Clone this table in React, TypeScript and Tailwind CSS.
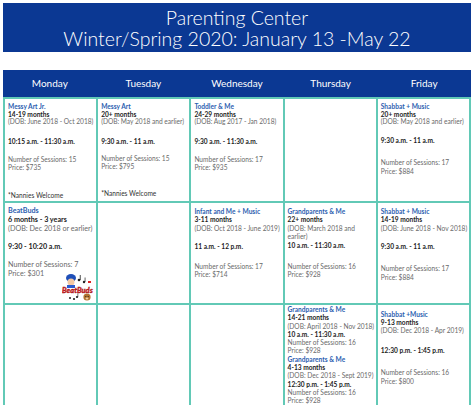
import type { ReactNode } from 'react';

const DAYS = ['Monday', 'Tuesday', 'Wednesday', 'Thursday', 'Friday'];

function Name({ children }: { children: ReactNode }) {
  return <div className="font-bold text-[#2c5eb0]">{children}</div>;
}

function Bold({ children, className = '' }: { children: ReactNode; className?: string }) {
  return <div className={`font-bold text-[#1c1c1c] ${className}`}>{children}</div>;
}

function Gray({ children, className = '' }: { children: ReactNode; className?: string }) {
  return <div className={`text-[#6a6a6a] ${className}`}>{children}</div>;
}

function Cell({ children, className = '' }: { children?: ReactNode; className?: string }) {
  return (
    <div className={`border-r-2 border-b-2 border-[#62c9b6] px-[3px] whitespace-nowrap overflow-hidden ${className}`}>
      {children}
    </div>
  );
}

function BeatBudsLogo() {
  return (
    <svg width="32" height="28" viewBox="0 0 32 28" className="block">
      {/* kid with blue hair */}
      <ellipse cx="9" cy="5" rx="5" ry="4" fill="#1f4fb8" />
      <circle cx="9" cy="9" r="3.5" fill="#f3c9a4" />
      <rect x="5" y="12" width="8" height="3" fill="#2a5ad0" />
      {/* notes */}
      <circle cx="17" cy="7" r="1.3" fill="#222" />
      <rect x="17.8" y="2" width="0.8" height="5" fill="#222" />
      <circle cx="22" cy="9" r="1.2" fill="#222" />
      <rect x="22.7" y="4.5" width="0.7" height="4.5" fill="#222" />
      <rect x="26" y="8" width="3" height="2" fill="#d22" />
      <text x="0" y="20" fontFamily="Lato, sans-serif" fontWeight="900" fontStyle="italic" fontSize="7.5" fill="#e3211d" stroke="#8a0d0d" strokeWidth="0.3">
        BeatBuds
      </text>
      {/* notes bottom */}
      <circle cx="8" cy="25" r="1" fill="#222" />
      <circle cx="12" cy="26" r="1.1" fill="#222" />
      <circle cx="15" cy="24" r="1.1" fill="#222" />
      <rect x="15.6" y="20.5" width="0.6" height="3.5" fill="#222" />
      {/* bear face */}
      <circle cx="25" cy="24" r="3.6" fill="#b0722e" />
      <circle cx="23.8" cy="23.5" r="0.6" fill="#222" />
      <circle cx="26.2" cy="23.5" r="0.6" fill="#222" />
      <ellipse cx="25" cy="25.5" rx="1.4" ry="0.9" fill="#f0d2a0" />
    </svg>
  );
}

export default function App() {
  return (
    <div className="w-[474px] h-[405px] overflow-hidden bg-white px-[3px] pt-[3px] font-['Lato',sans-serif]">
      <div className="h-[49px] bg-[#0b3893] flex flex-col items-center justify-center text-white font-light text-[19.5px] leading-[21px]">
        <div>Parenting Center</div>
        <div>Winter/Spring 2020: January 13 -May 22</div>
      </div>

      <div className="mt-[18px] h-[27px] bg-[#0b3893] grid grid-cols-5 items-center text-white text-[10px]">
        {DAYS.map((d) => (
          <div key={d} className="text-center">{d}</div>
        ))}
      </div>

      <div className="grid grid-cols-5 grid-rows-[104px_102px_110px] border-l-2 border-t-2 border-[#62c9b6] text-[6.6px] leading-[7.6px]">
        {/* row 1 */}
        <Cell className="pt-[4px]">
          <Name>Messy Art Jr.</Name>
          <Bold>14-19 months</Bold>
          <Gray>(DOB: June 2018 - Oct 2018)</Gray>
          <Bold className="mt-[12px]">10:15 a.m. - 11:30 a.m.</Bold>
          <Gray className="mt-[11px]">Number of Sessions: 15</Gray>
          <Gray>Price: $735</Gray>
          <Gray className="mt-[20px] text-[#333]">*Nannies Welcome</Gray>
        </Cell>
        <Cell className="pt-[4px]">
          <Name>Messy Art</Name>
          <Bold>20+ months</Bold>
          <Gray>(DOB: May 2018 and earlier)</Gray>
          <Bold className="mt-[12px]">9:30 a.m. - 11 a.m.</Bold>
          <Gray className="mt-[10px]">Number of Sessions: 15</Gray>
          <Gray>Price: $795</Gray>
          <Gray className="mt-[19px] text-[#333]">*Nannies Welcome</Gray>
        </Cell>
        <Cell className="pt-[4px]">
          <Name>Toddler &amp; Me</Name>
          <Bold>24-29 months</Bold>
          <Gray>(DOB: Aug 2017 - Jan 2018)</Gray>
          <Bold className="mt-[12px]">9:30 a.m. - 11:30 a.m.</Bold>
          <Gray className="mt-[11px]">Number of Sessions: 17</Gray>
          <Gray>Price: $935</Gray>
        </Cell>
        <Cell />
        <Cell className="pt-[4px]">
          <Name>Shabbat + Music</Name>
          <Bold>20+ months</Bold>
          <Gray>(DOB: May 2018 and earlier)</Gray>
          <Bold className="mt-[11px]">9:30 a.m. - 11 a.m.</Bold>
          <div className="mt-[14px] leading-[9px]">
            <Gray>Number of Sessions: 17</Gray>
            <Gray>Price: $884</Gray>
          </div>
        </Cell>

        {/* row 2 */}
        <Cell className="pt-[4px] text-[7.2px] leading-[8.8px] flex flex-col">
          <Name>BeatBuds</Name>
          <Bold>6 months - 3 years</Bold>
          <Gray>(DOB: Dec 2018 or earlier)</Gray>
          <Bold className="mt-[10px]">9:30 - 10:20 a.m.</Bold>
          <Gray className="mt-[9px]">Number of Sessions: 7</Gray>
          <Gray>Price: $301</Gray>
          <div className="-mt-[6px] self-end mr-[-1px]">
            <BeatBudsLogo />
          </div>
        </Cell>
        <Cell />
        <Cell className="pt-[4px] leading-[8.4px]">
          <Name>Infant and Me + Music</Name>
          <Bold>3-11 months</Bold>
          <Gray>(DOB: Oct 2018 - June 2019)</Gray>
          <Bold className="mt-[10px]">11 a.m. - 12 p.m.</Bold>
          <Gray className="mt-[11px]">Number of Sessions: 17</Gray>
          <Gray>Price: $714</Gray>
        </Cell>
        <Cell className="pt-[4px] leading-[8.4px]">
          <Name>Grandparents &amp; Me</Name>
          <Bold>22+ months</Bold>
          <Gray>(DOB: March 2018 and</Gray>
          <Gray>earlier)</Gray>
          <Bold>10 a.m. - 11:30 a.m.</Bold>
          <Gray className="mt-[13px]">Number of Sessions: 16</Gray>
          <Gray>Price: $928</Gray>
        </Cell>
        <Cell className="pt-[4px] leading-[8.4px]">
          <Name>Shabbat + Music</Name>
          <Bold>14-19 months</Bold>
          <Gray>(DOB: June 2018 - Nov 2018)</Gray>
          <Bold className="mt-[10px]">9:30 a.m. - 11 a.m.</Bold>
          <div className="mt-[13px] leading-[9px]">
            <Gray>Number of Sessions: 17</Gray>
            <Gray>Price: $884</Gray>
          </div>
        </Cell>

        {/* row 3 */}
        <Cell />
        <Cell />
        <Cell />
        <Cell className="pt-0 leading-[8.3px]">
          <Name>Grandparents &amp; Me</Name>
          <Bold>14-21 months</Bold>
          <Gray>(DOB: April 2018 - Nov 2018)</Gray>
          <Bold>10 a.m. - 11:30 a.m.</Bold>
          <Gray>Number of Sessions: 16</Gray>
          <Gray>Price: $928</Gray>
          <Name>Grandparents &amp; Me</Name>
          <Bold>4-13 months</Bold>
          <Gray>(DOB: Dec 2018 - Sept 2019)</Gray>
          <Bold>12:30 p.m. - 1:45 p.m.</Bold>
          <Gray>Number of Sessions: 16</Gray>
          <Gray>Price: $928</Gray>
        </Cell>
        <Cell className="pt-[5px] leading-[8.2px]">
          <Name>Shabbat +Music</Name>
          <Bold>9-13 months</Bold>
          <Gray>(DOB: Dec 2018 - Apr 2019)</Gray>
          <Bold className="mt-[11px]">12:30 p.m. - 1:45 p.m.</Bold>
          <div className="mt-[14px] leading-[9px]">
            <Gray>Number of Sessions: 16</Gray>
            <Gray>Price: $800</Gray>
          </div>
        </Cell>
      </div>
    </div>
  );
}
